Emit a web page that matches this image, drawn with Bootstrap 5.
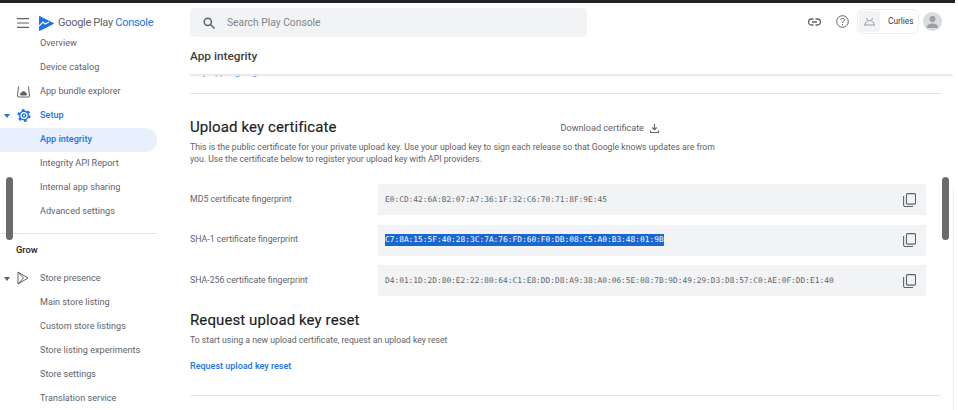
<!doctype html>
<html lang="en"><head><meta charset="utf-8"><title>App integrity</title>
<link rel="stylesheet" href="https://cdn.jsdelivr.net/npm/bootstrap@5.3.0/dist/css/bootstrap.min.css">
<style>
html,body{height:410px;overflow:hidden;background:#fff}
body{font-family:Roboto,"Liberation Sans",sans-serif;color:#5f6368;font-size:9px;position:relative}
.pc-strip{height:3px;background:#202124;margin-right:3px}
.pc-head{height:35px}
.pc-brand{width:190px;padding-left:17px;gap:10px;margin-top:5px}
.pc-word{font-size:11px;letter-spacing:-.3px;color:#5f6368;margin-left:-6px}
.pc-word span{color:#1a73e8}
.pc-search{width:397px;height:29px;background:#f1f3f4;border-radius:4px;padding-left:13px;gap:12px;font-size:10.3px;color:#80868b;margin-top:4px}
.pc-tools{flex:1;justify-content:flex-end;padding-right:16px;margin-top:2px}
.pc-app{width:62px;height:25px;border:1px solid #eceded;border-radius:6px;margin-left:8px;font-size:8.3px;color:#3c4043;gap:8px;padding:1px}
.pc-appicon{width:21px;height:21px;background:#f1f3f4;border-radius:3px}
.pc-avatar{width:19px;height:19px;border-radius:50%;background:#dadce0;margin-left:4px;overflow:hidden}
.pc-body{height:372px;overflow:hidden}
.pc-side{width:157px;flex:none;overflow:hidden;margin-right:33px}
.pc-list{margin-top:-6px}
.pc-row{height:24px;padding-left:40px;font-size:9.1px;color:#5f6368;white-space:nowrap;position:relative}
.pc-row svg{position:absolute;top:4px}
.pc-blue{color:#1a73e8;font-weight:500}
.pc-active{background:#e8f0fe;border-radius:0 12px 12px 0}
.pc-rule{height:1px;background:#e3e4e6;margin:9px 0 0}
.pc-group{height:33px;padding-left:16px;padding-bottom:1px;font-size:9.3px;font-weight:500;color:#202124}
.pc-main{width:763px;flex:none;overflow:hidden;padding-right:12px}
.pc-title{height:37px;font-size:11.8px;font-weight:500;color:#3c4043;padding-top:2px;border-bottom:1px solid #e6e7e8;box-shadow:0 1px 2px #e6e7e8;position:relative;margin-right:-12px}
.pc-clip{height:3px;overflow:hidden;color:#1a73e8;font-size:9px;line-height:9px;margin-bottom:15px}
.pc-clip div{margin-top:-7px}
.pc-rule2{height:1px;background:#e3e4e6}
.pc-h{font-size:15px;line-height:20px;color:#202124;font-weight:400;margin:0;letter-spacing:.1px;-webkit-text-stroke:.15px #202124}
.pc-cert{margin-top:23px}
.pc-dl{margin-left:224px;font-size:9.1px;color:#5f6368;gap:6px;margin-top:3px}
.pc-desc{width:530px;line-height:12px;margin:4px 0 0;font-size:8.7px;color:#5f6368}
.pc-gap{height:19px}
.pc-fp{height:31px;margin-bottom:9.5px;color:#5f6368;font-size:8.75px}
.pc-fplabel{width:188px;flex:none}
.pc-fpbox{width:548px;height:31px;background:#f1f3f4;border-radius:2px;padding:0 10px 0 7px;font-family:"DejaVu Sans Mono",monospace;font-size:7.85px;justify-content:space-between}
.pc-sel{background:#1967d2;color:#fff}
.pc-h2b{margin-top:14px}
.pc-desc2{margin-top:4px}
.pc-link{color:#1a73e8;font-weight:500;text-decoration:none;font-size:9px;display:block;margin-top:14px}
.pc-end{margin-top:21px}
.pc-thumb{position:absolute;width:7px;height:63px;top:177px;background:#6b6b6b;border-radius:4px}
.pc-track{position:absolute;left:953px;top:190px;bottom:0;width:1px;background:#ececec}
</style></head><body>
<div class="pc-strip"></div>
<header class="pc-head d-flex align-items-center">
  <div class="pc-brand d-flex align-items-center">
    <svg width="12" height="10" viewBox="0 0 12 10" fill="#5f6368"><path d="M0 0h12v1.200H0zM0 4.400h12v1.200H0zM0 8.800h12V10H0z"/></svg>
    <svg width="15" height="15" viewBox="0 0 15 15"><path d="M.5.500l14 7-14 7z" fill="#1a73e8" stroke="#1a73e8" stroke-linejoin="round"/><path d="M0 10l4-4 2 2 4-2" fill="none" stroke="#fff" stroke-width="1.100"/></svg>
    <div class="pc-word">Google Play <span>Console</span></div>
  </div>
  <div class="pc-search d-flex align-items-center">
    <svg width="12" height="12" viewBox="0 0 12 12" fill="none" stroke="#5f6368" stroke-width="1.500"><circle cx="4.800" cy="4.800" r="3.600"/><path d="M7.500 7.500l4 4"/></svg>
    <span>Search Play Console</span>
  </div>
  <div class="pc-tools d-flex align-items-center">
    <svg width="13" height="8" viewBox="0 0 13 8" fill="none" stroke="#5f6368" stroke-width="1.300"><path d="M5.500 1H3.500a3 3 0 000 6h2M7.500 1h2a3 3 0 010 6h-2M4 4h5"/></svg>
    <svg style="margin-left:15px" width="13" height="13" viewBox="0 0 13 13" fill="none" stroke="#5f6368" stroke-width="1"><circle cx="6.500" cy="6.500" r="5.800"/><path d="M4.700 5.100c0-2.300 3.700-2.300 3.700-.2 0 1.400-1.900 1.400-1.900 3M6.500 9v1.200"/></svg>
    <div class="pc-app d-flex align-items-center">
      <div class="pc-appicon d-flex align-items-center justify-content-center"><svg width="13" height="9" viewBox="0 0 13 9" fill="none" stroke="#9aa0a6" stroke-width="1"><path d="M1 8h11M2 8c0-3 2-4.500 4.500-4.500S11 5 11 8M3.500 1l1 2.500M9.500 1l-1 2.500"/></svg></div>
      <span>Curlies</span>
    </div>
    <div class="pc-avatar"><svg width="19" height="19" viewBox="0 0 19 19" fill="#9aa0a6"><circle cx="9.500" cy="7" r="3"/><path d="M4 15.500c0-3 3-4 5.500-4s5.500 1 5.500 4a1 1 0 01-1 .500H5a1 1 0 01-1-.500z"/></svg></div>
  </div>
</header>
<div class="pc-body d-flex">
  <nav class="pc-side">
    <div class="pc-list">
      <div class="pc-row d-flex align-items-center">Overview</div>
      <div class="pc-row d-flex align-items-center">Device catalog</div>
      <div class="pc-row d-flex align-items-center"><svg style="left:16px" width="15" height="15" viewBox="0 0 15 15" fill="none" stroke="#5f6368"><path d="M2.500 2.500l-1 9.500a1 1 0 001 1h10a1 1 0 001-1l-1-9.500"/><path d="M4.500 11c0-2 1.300-3.300 3-3.300s3 1.300 3 3.300z" fill="#5f6368"/></svg>App bundle explorer</div>
      <div class="pc-row pc-blue d-flex align-items-center"><svg style="left:4px;top:10px" width="6" height="4" viewBox="0 0 6 4" fill="#1a73e8"><path d="M0 0h6L3 4z"/></svg><svg style="left:17px" width="14" height="15" viewBox="0 0 14 15" fill="none" stroke="#1a73e8"><circle cx="7" cy="7.500" r="4.300" stroke-width="1.400"/><circle cx="7" cy="7.500" r="5.500" stroke-width="2.200" stroke-dasharray="2.600 3.160"/><circle cx="7" cy="7.500" r="1.700" stroke-width="1.300"/></svg>Setup</div>
      <div class="pc-row pc-blue pc-active d-flex align-items-center">App integrity</div>
      <div class="pc-row d-flex align-items-center">Integrity API Report</div>
      <div class="pc-row d-flex align-items-center">Internal app sharing</div>
      <div class="pc-row d-flex align-items-center">Advanced settings</div>
    </div>
    <div class="pc-rule"></div>
    <div class="pc-group d-flex align-items-center">Grow</div>
    <div>
      <div class="pc-row d-flex align-items-center"><svg style="left:4px;top:10px" width="6" height="4" viewBox="0 0 6 4" fill="#5f6368"><path d="M0 0h6L3 4z"/></svg><svg style="left:17px" width="12" height="14" viewBox="0 0 12 14" fill="none" stroke="#5f6368"><path d="M1 1l10 6-10 6zM1 1l5.500 6L1 13"/></svg>Store presence</div>
      <div class="pc-row d-flex align-items-center">Main store listing</div>
      <div class="pc-row d-flex align-items-center">Custom store listings</div>
      <div class="pc-row d-flex align-items-center">Store listing experiments</div>
      <div class="pc-row d-flex align-items-center">Store settings</div>
      <div class="pc-row d-flex align-items-center">Translation service</div>
    </div>
  </nav>
  <main class="pc-main">
    <div class="pc-title d-flex align-items-center">App integrity</div>
    <div class="pc-clip"><div>Play App Signing</div></div>
    <div class="pc-rule2"></div>
    <section class="pc-cert">
      <div class="d-flex align-items-center">
        <h2 class="pc-h">Upload key certificate</h2>
        <div class="pc-dl d-flex align-items-center">Download certificate <svg width="9" height="9" viewBox="0 0 9 9" fill="none" stroke="#5f6368" stroke-width="1.100"><path d="M4.500 0v5.500M2.300 3.500l2.200 2.200 2.200-2.200M.5 6.500v2h8v-2"/></svg></div>
      </div>
      <p class="pc-desc">This is the public certificate for your private upload key. Use your upload key to sign each release so that Google knows updates are from you. Use the certificate below to register your upload key with API providers.</p>
    </section>
    <div class="pc-gap"></div>
    <div class="pc-fp d-flex align-items-center"><div class="pc-fplabel">MD5 certificate fingerprint</div><div class="pc-fpbox d-flex align-items-center"><span>E0:CD:42:6A:B2:07:A7:36:1F:32:C6:70:71:8F:9E:45</span><svg width="13" height="14" viewBox="0 0 13 14" fill="none" stroke="#5f6368" stroke-width="1.100"><rect x="3.500" y=".6" width="9" height="10.500" rx="1"/><path d="M.6 3v9a1.500 1.500 0 001.500 1.500h8"/></svg></div></div>
    <div class="pc-fp d-flex align-items-center"><div class="pc-fplabel">SHA-1 certificate fingerprint</div><div class="pc-fpbox d-flex align-items-center"><span class="pc-sel">C7:8A:15:5F:40:28:3C:7A:76:FD:60:F0:DB:08:C5:A0:B3:48:01:9B</span><svg width="13" height="14" viewBox="0 0 13 14" fill="none" stroke="#5f6368" stroke-width="1.100"><rect x="3.500" y=".6" width="9" height="10.500" rx="1"/><path d="M.6 3v9a1.500 1.500 0 001.500 1.500h8"/></svg></div></div>
    <div class="pc-fp d-flex align-items-center"><div class="pc-fplabel">SHA-256 certificate fingerprint</div><div class="pc-fpbox d-flex align-items-center"><span>D4:01:1D:2D:80:E2:22:80:64:C1:E8:DD:D8:A9:38:A0:06:5E:08:7B:9D:49:29:D3:D8:57:C0:AE:0F:DD:E1:40</span><svg width="13" height="14" viewBox="0 0 13 14" fill="none" stroke="#5f6368" stroke-width="1.100"><rect x="3.500" y=".6" width="9" height="10.500" rx="1"/><path d="M.6 3v9a1.500 1.500 0 001.500 1.500h8"/></svg></div></div>
    <h2 class="pc-h pc-h2b">Request upload key reset</h2>
    <p class="pc-desc pc-desc2">To start using a new upload certificate, request an upload key reset</p>
    <a class="pc-link" href="#">Request upload key reset</a>
    <div class="pc-rule2 pc-end"></div>
  </main>
</div>
<div class="pc-thumb" style="left:6px"></div>
<div class="pc-thumb" style="left:942px"></div>
<div class="pc-track"></div>
</body></html>
